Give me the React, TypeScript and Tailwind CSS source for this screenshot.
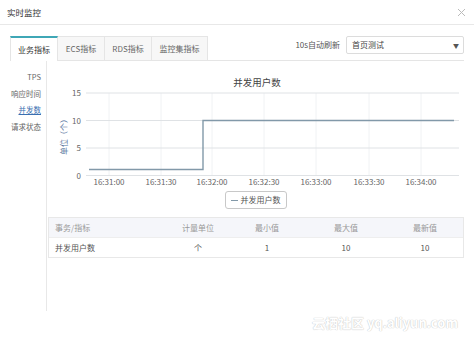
import React from "react";

const xTicks = [
  { x: 62, t: "16:31:00" },
  { x: 114, t: "16:31:30" },
  { x: 165, t: "16:32:00" },
  { x: 217, t: "16:32:30" },
  { x: 269, t: "16:33:00" },
  { x: 322, t: "16:33:30" },
  { x: 374, t: "16:34:00" },
];

const yTicks = [
  { y: 32, t: "15" },
  { y: 59.5, t: "10" },
  { y: 87, t: "5" },
  { y: 114.5, t: "0" },
];

function Chart() {
  return (
    <svg width="416" height="129" viewBox="0 0 416 129" className="block">
      <text x="210" y="24.5" textAnchor="middle" fontSize="9.5" fill="#444">
        并发用户数
      </text>
      {xTicks.map((d) => (
        <line key={d.t} x1={d.x} x2={d.x} y1="32" y2="114.5" stroke="#f0f2f4" strokeWidth="1" />
      ))}
      {yTicks.map((d) => (
        <g key={d.t}>
          <line x1="39" x2="412" y1={d.y} y2={d.y} stroke="#dfe2e5" strokeWidth="1" />
          <text x="34" y={d.y + 3} textAnchor="end" fontSize="8" fill="#666">
            {d.t}
          </text>
        </g>
      ))}
      {xTicks.map((d) => (
        <text key={"l" + d.t} x={d.x} y="123.5" textAnchor="middle" fontSize="8" fill="#666">
          {d.t}
        </text>
      ))}
      <text
        x="16"
        y="74"
        fontSize="8"
        fill="#4f6f99"
        textAnchor="middle"
        dominantBaseline="central"
        transform="rotate(-90 16 74)"
      >
        单位（个）
      </text>
      <path d="M42 108.5 H156 V59.5 H407" fill="none" stroke="#8299a9" strokeWidth="1.4" />
    </svg>
  );
}

export default function App() {
  return (
    <div className="relative w-[474px] h-[339px] overflow-hidden bg-white font-['Noto_Sans_CJK_SC',sans-serif] text-[#333]">
      <div className="h-[25px] border-b border-[#e8e8e8] flex items-center justify-between pl-[7px] pr-[8px]">
        <span className="text-[8.5px] leading-none">实时监控</span>
        <svg width="9" height="9" viewBox="0 0 9 9">
          <path d="M1 1 L8 8 M8 1 L1 8" stroke="#bbb" strokeWidth="1" />
        </svg>
      </div>

      <div className="px-[10px]">
        <div className="pt-[11px] flex items-end justify-between border-b border-[#e5e5e5]">
          <div className="flex text-[8px]">
            <div className="w-[48px] h-[25px] -mb-px bg-white border-t-2 border-t-[#3fa7b6] border-x border-x-[#e5e5e5] flex items-center justify-center text-[#333]">
              业务指标
            </div>
            <div className="w-[47px] h-[24px] bg-[#f7f7f7] border-t border-r border-[#e5e5e5] flex items-center justify-center text-[#666]">
              ECS指标
            </div>
            <div className="w-[47px] h-[24px] bg-[#f7f7f7] border-t border-r border-[#e5e5e5] flex items-center justify-center text-[#666]">
              RDS指标
            </div>
            <div className="w-[56px] h-[24px] bg-[#f7f7f7] border-t border-r border-[#e5e5e5] flex items-center justify-center text-[#666]">
              监控集指标
            </div>
          </div>
          <div className="flex items-center gap-[6px] mb-[6px] text-[8px]">
            <span className="text-[#555]">10s自动刷新</span>
            <div className="w-[118px] h-[18px] border border-[#dcdcdc] rounded-[2px] flex items-center justify-between pl-[5px] pr-[4px] text-[#444]">
              <span>首页测试</span>
              <span className="text-[6px] text-[#555]">▼</span>
            </div>
          </div>
        </div>

        <div className="flex">
          <div className="w-[37px] h-[250px] border-r border-[#e8e8e8] pt-[8px] pr-[5px] flex flex-col items-end whitespace-nowrap text-[7.5px] leading-[16.5px] text-[#666]">
            <span>TPS</span>
            <span>响应时间</span>
            <span className="text-[#3a6fb0] underline">并发数</span>
            <span>请求状态</span>
          </div>

          <div className="flex-1 flex flex-col">
            <Chart />
            <div className="flex justify-center pt-[1px]">
              <div className="h-[18px] px-[5px] border border-[#c8c8c8] rounded-[3px] flex items-center gap-[3px] text-[8px] text-[#555]">
                <span className="w-[7px] h-[1px] bg-[#8299a9]" />
                <span>并发用户数</span>
              </div>
            </div>
            <div className="mt-[8px] ml-[1px] border border-[#e8e8e8] text-[8px]">
              <div className="h-[19px] bg-[#f5f6fa] grid grid-cols-[110px_78px_60px_98px_60px] items-center text-[#999]">
                <span className="pl-[6px]">事务/指标</span>
                <span className="text-center">计量单位</span>
                <span className="text-center">最小值</span>
                <span className="text-center">最大值</span>
                <span className="text-center">最新值</span>
              </div>
              <div className="h-[20px] border-t border-[#eeeeee] grid grid-cols-[110px_78px_60px_98px_60px] items-center text-[#555]">
                <span className="pl-[6px]">并发用户数</span>
                <span className="text-center">个</span>
                <span className="text-center">1</span>
                <span className="text-center">10</span>
                <span className="text-center">10</span>
              </div>
            </div>
          </div>
        </div>
      </div>

      <div className="absolute left-[312px] top-[313px] text-[13px] font-bold text-white [text-shadow:0_0_1px_#c8c8c8,0_0_1px_#c8c8c8]">
        云栖社区 yq.aliyun.com
      </div>
    </div>
  );
}
